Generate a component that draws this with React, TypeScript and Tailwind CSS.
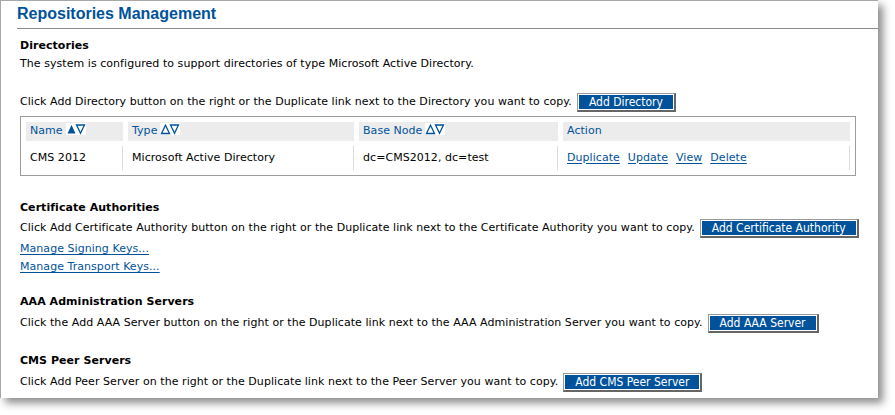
import React from 'react'

const SortArrows = ({ active }: { active?: boolean }) => (
  <svg width="20" height="12" viewBox="0 0 20 12" className="inline-block align-[-1px] ml-[3px]">
    <rect x="0" y="0" width="20" height="12" fill="#fff" />
    {active ? (
      <path d="M1.5 10.5 L5.5 2 L9.5 10.5 Z" fill="#00529b" />
    ) : (
      <path d="M1.5 10.5 L5.5 2.2 L9.5 10.5 Z" fill="none" stroke="#00529b" strokeWidth="1.3" strokeLinejoin="miter" />
    )}
    <path d="M10.5 2 L18.5 2 L14.5 10.3 Z" fill="none" stroke="#00529b" strokeWidth="1.3" />
  </svg>
)

const AddButton = ({ label }: { label: string }) => (
  <button className="ml-[5px] h-[19px] px-[11px] bg-[#00529b] text-white text-[12px] leading-[15px] tracking-normal font-['DejaVu_Sans_Condensed','DejaVu_Sans',sans-serif] border border-t-[#9a9a9a] border-l-[#9a9a9a] border-r-2 border-b-2 border-r-[#666] border-b-[#666] shadow-[inset_0_0_0_1px_#fff]">
    {label}
  </button>
)

const Heading = ({ children, className = '' }: { children: React.ReactNode; className?: string }) => (
  <div className={`font-bold leading-[18px] ${className}`}>{children}</div>
)

const linkCls = 'text-[#00529b] underline underline-offset-[2px]'

export default function App() {
  return (
    <div className="w-[895px] h-[415px] bg-white font-['DejaVu_Sans',sans-serif] text-[11px] tracking-[0.05px] text-black">
      <div className="w-[878px] h-[398px] bg-white border-l border-t border-[#a8a8a8] shadow-[5px_5px_8px_rgba(0,0,0,0.45)]">
        {/* page title */}
        <div className="ml-[16px] pt-[3px] pb-[4px] border-b border-[#8a8a8a]">
          <h1 className="font-['Liberation_Sans',Arial,sans-serif] font-bold text-[16px] leading-[20px] tracking-normal text-[#00529b]">
            Repositories Management
          </h1>
        </div>

        <div className="pl-[19px]">
          {/* directories */}
          <Heading className="mt-[8px]">Directories</Heading>
          <div className="leading-[18px]">The system is configured to support directories of type Microsoft Active Directory.</div>
          <div className="mt-[20px] h-[19px] flex items-center">
            <span>Click Add Directory button on the right or the Duplicate link next to the Directory you want to copy.</span>
            <AddButton label="Add Directory" />
          </div>

          <table className="mt-[4px] w-[836px] table-fixed border-separate border-spacing-[5px] border border-[#9c9c9c]">
            <colgroup>
              <col className="w-[97px]" />
              <col className="w-[226px]" />
              <col className="w-[199px]" />
              <col className="w-[287px]" />
            </colgroup>
            <thead>
              <tr className="h-[19px]">
                <th className="bg-[#ececec] text-left font-normal text-[#00529b] pl-[4px] p-0">
                  Name<SortArrows active />
                </th>
                <th className="bg-[#ececec] text-left font-normal text-[#00529b] pl-[4px] p-0">
                  Type<SortArrows />
                </th>
                <th className="bg-[#ececec] text-left font-normal text-[#00529b] pl-[4px] p-0">
                  Base Node<SortArrows />
                </th>
                <th className="bg-[#ececec] text-left font-normal text-[#00529b] pl-[4px] p-0">Action</th>
              </tr>
            </thead>
            <tbody>
              <tr className="h-[24px]">
                <td className="pl-[4px] border-r border-[#dcdcdc]">CMS 2012</td>
                <td className="pl-[4px] border-r border-[#dcdcdc]">Microsoft Active Directory</td>
                <td className="pl-[4px] border-r border-[#dcdcdc]">dc=CMS2012, dc=test</td>
                <td className="pl-[4px] border-r border-[#dcdcdc]">
                  <span className="flex gap-[8px]">
                    <a href="#" className={linkCls}>Duplicate</a>
                    <a href="#" className={linkCls}>Update</a>
                    <a href="#" className={linkCls}>View</a>
                    <a href="#" className={linkCls}>Delete</a>
                  </span>
                </td>
              </tr>
            </tbody>
          </table>

          {/* certificate authorities */}
          <Heading className="mt-[23px]">Certificate Authorities</Heading>
          <div className="mt-[2px] h-[19px] flex items-center">
            <span>Click Add Certificate Authority button on the right or the Duplicate link next to the Certificate Authority you want to copy.</span>
            <AddButton label="Add Certificate Authority" />
          </div>
          <div className="mt-[2px] leading-[18px]">
            <a href="#" className={linkCls}>Manage Signing Keys...</a>
          </div>
          <div className="leading-[18px]">
            <a href="#" className={linkCls}>Manage Transport Keys...</a>
          </div>

          {/* aaa servers */}
          <Heading className="mt-[17px]">AAA Administration Servers</Heading>
          <div className="mt-[3px] h-[19px] flex items-center">
            <span>Click the Add AAA Server button on the right or the Duplicate link next to the AAA Administration Server you want to copy.</span>
            <AddButton label="Add AAA Server" />
          </div>

          {/* peer servers */}
          <Heading className="mt-[19px]">CMS Peer Servers</Heading>
          <div className="mt-[3px] h-[19px] flex items-center">
            <span>Click Add Peer Server on the right or the Duplicate link next to the Peer Server you want to copy.</span>
            <AddButton label="Add CMS Peer Server" />
          </div>
        </div>
      </div>
    </div>
  )
}
